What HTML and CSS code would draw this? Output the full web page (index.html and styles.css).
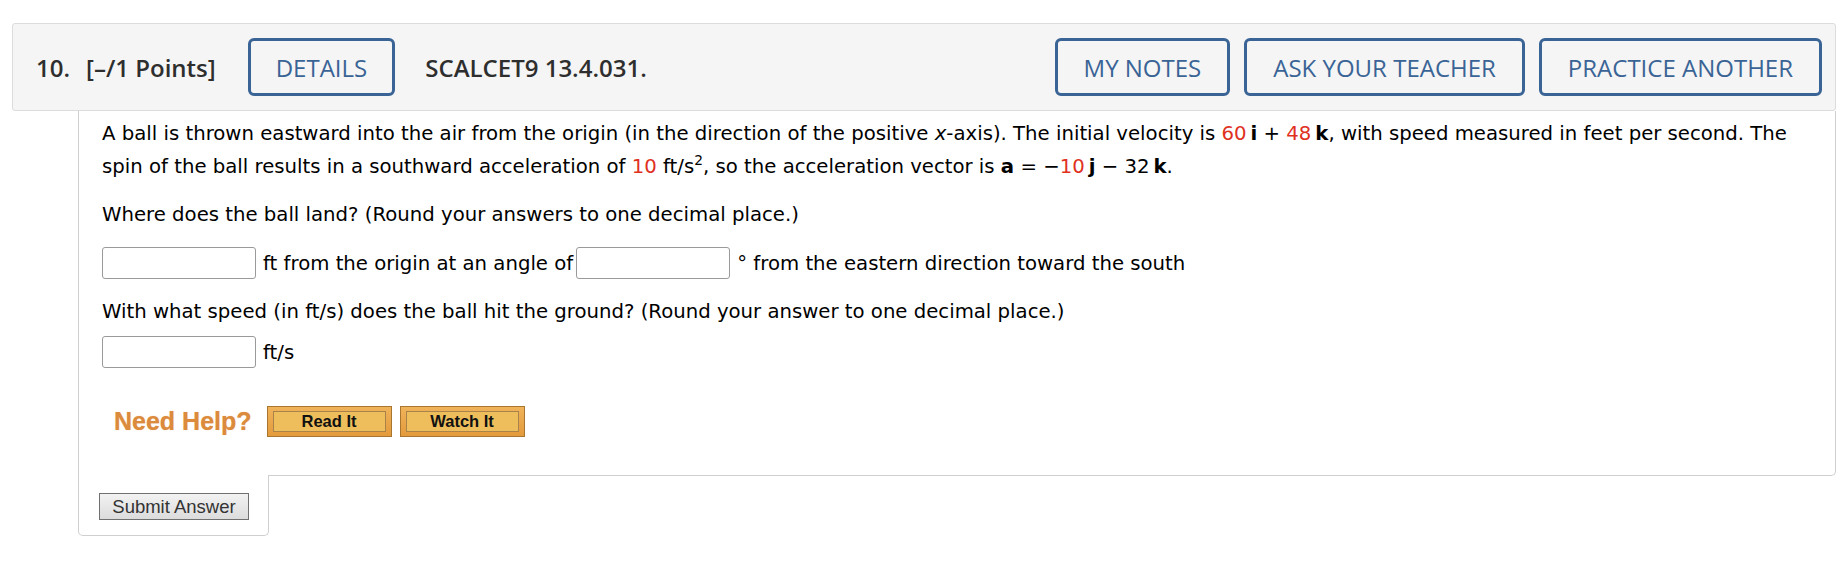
FILE: index.html
```html
<!DOCTYPE html>
<html>
<head>
<meta charset="utf-8">
<link rel="stylesheet" href="styles.css">
</head>
<body>
<div class="question">
  <div class="qhead">
    <span class="qnum">10.</span>
    <span class="qpoints">[–/1 Points]</span>
    <button class="hbtn details">DETAILS</button>
    <span class="qcode">SCALCET9 13.4.031.</span>
    <div class="hspacer"></div>
    <button class="hbtn">MY NOTES</button>
    <button class="hbtn">ASK YOUR TEACHER</button>
    <button class="hbtn">PRACTICE ANOTHER</button>
  </div>
  <div class="qbody">
    <p class="para first">A ball is thrown eastward into the air from the origin (in the direction of the positive <i>x</i>-axis). The initial velocity is <span class="red">60</span>&thinsp;<b>i</b> + <span class="red">48</span>&thinsp;<b>k</b>, with speed measured in feet per second. The spin of the ball results in a southward acceleration of <span class="red">10</span> ft/s<sup>2</sup>, so the acceleration vector is <b>a</b> = −<span class="red">10</span>&thinsp;<b>j</b> − 32&thinsp;<b>k</b>.</p>
    <p class="para q2">Where does the ball land? (Round your answers to one decimal place.)</p>
    <div class="arow r1"><input class="ans" type="text"><span class="lbl">ft from the origin at an angle of</span><input class="ans tight" type="text"><span class="lbl">° from the eastern direction toward the south</span></div>
    <p class="para q3">With what speed (in ft/s) does the ball hit the ground? (Round your answer to one decimal place.)</p>
    <div class="arow r2"><input class="ans" type="text"><span class="lbl">ft/s</span></div>
    <div class="help">
      <span class="needhelp">Need Help?</span>
      <button class="hlp"><span class="hin">Read It</span></button>
      <button class="hlp"><span class="hin">Watch It</span></button>
    </div>
  </div>
  <div class="submittab">
    <button class="submit">Submit Answer</button>
  </div>
</div>
</body>
</html>
```
FILE: styles.css
```css
html, body {
  margin: 0;
  padding: 0;
  background: #fff;
}
.question {
  padding: 23px 7px 20px 12px;
}
.qhead {
  display: flex;
  align-items: center;
  height: 86px;
  padding: 0 13px 0 23px;
  background: #f5f5f5;
  border: 1px solid #dcdcdc;
  border-radius: 3px;
  font-family: "Open Sans", "Liberation Sans", sans-serif;
  font-size: 24px;
  color: #2e2e2e;
}
.qnum {
  font-weight: 650;
  margin-right: 16px;
}
.qpoints {
  font-weight: 650;
  margin-right: 32px;
}
.qcode {
  font-weight: 650;
  margin-left: 30px;
}
.hspacer {
  flex: 1;
}
.hbtn {
  height: 58px;
  padding: 0 26px;
  border: 3px solid #3a6496;
  border-radius: 6px;
  background: #f5f5f5;
  color: #3a6496;
  font-family: "Open Sans", "Liberation Sans", sans-serif;
  font-size: 24px;
  font-weight: 400;
  margin-left: 14px;
  cursor: pointer;
}
.hbtn.details {
  margin-left: 0;
  padding: 0 25px;
}
.qbody {
  margin-left: 66px;
  border: 1px solid #cfcfcf;
  border-top: none;
  border-bottom-right-radius: 5px;
  padding: 6px 23px 38px 23px;
  font-family: "DejaVu Sans", Verdana, sans-serif;
  font-size: 19.7px;
  line-height: 33px;
  color: #000;
}
.para {
  margin: 0;
}
.q2 {
  margin-top: 15px;
}
.q3 {
  margin-top: 16px;
}
.red {
  color: #e0301e;
}
sup {
  font-size: 70%;
  line-height: 0;
  vertical-align: 0.55em;
}
.arow {
  display: flex;
  align-items: center;
  height: 32px;
}
.r1 {
  margin-top: 16px;
}
.r2 {
  margin-top: 8px;
}
.ans {
  box-sizing: border-box;
  width: 154px;
  height: 32px;
  border: 1px solid #9a9a9a;
  border-radius: 3px;
  background: #fff;
  margin: 0;
  padding: 0 4px;
}
.lbl {
  margin: 0 6px 0 7px;
  white-space: nowrap;
}
.ans.tight {
  margin-left: -3px;
}
.help {
  display: flex;
  align-items: center;
  margin-top: 38px;
  height: 31px;
}
.needhelp {
  font-family: "Liberation Sans", Arial, sans-serif;
  font-weight: bold;
  font-size: 25px;
  color: #dc8a3c;
  margin-left: 12px;
  margin-right: 15px;
  text-shadow: 0 0 1px rgba(220, 138, 60, 0.6);
}
.hlp {
  box-sizing: border-box;
  width: 125px;
  height: 31px;
  padding: 4px 5px;
  margin: 0 8px 0 0;
  border: 1px solid #a8762f;
  background: linear-gradient(#f0b35a, #e39a3c);
  display: flex;
  cursor: pointer;
}
.hin {
  flex: 1;
  display: flex;
  align-items: center;
  justify-content: center;
  border: 1px solid #a9834a;
  background: #eebe5c;
  font-family: "Liberation Sans", Arial, sans-serif;
  font-weight: bold;
  font-size: 16.5px;
  color: #111;
}
.submittab {
  margin-left: 66px;
  margin-top: -1px;
  width: 189px;
  height: 59px;
  box-sizing: content-box;
  background: #fff;
  border: 1px solid #cfcfcf;
  border-top: none;
  border-radius: 0 0 5px 5px;
  padding-top: 1px;
  display: flex;
  align-items: flex-start;
}
.submit {
  margin: 17px 0 0 20px;
  width: 150px;
  height: 27px;
  padding: 0;
  border: 1px solid #707070;
  background: linear-gradient(#f2f2f2, #dcdcdc);
  font-family: "Liberation Sans", Arial, sans-serif;
  font-size: 18.5px;
  color: #333;
  border-radius: 0;
  cursor: pointer;
}
```
